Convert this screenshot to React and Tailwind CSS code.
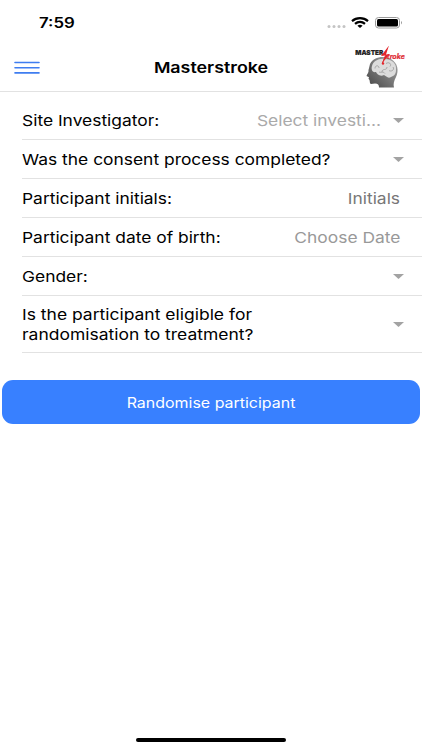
import React from 'react';

// Wide text, anchored to the side it is aligned with
const WideText = ({ className, children }) => (
  <span className={`inline-block whitespace-nowrap ${className}`}>{children}</span>
);

const Caret = () => (
  <svg className="ml-3 -mr-1 h-[5px] w-[11px] shrink-0" viewBox="0 0 11 5" fill="#a3a3a3">
    <path d="M0 0H11L5.5 5Z" />
  </svg>
);

const StatusBar = () => (
  <div className="flex h-[44px] items-center justify-between pr-[19px] pl-[39px]">
    <WideText className="mt-[1px] origin-left scale-x-[1.2] text-[14px] leading-5 font-semibold">7:59</WideText>
    <div className="mt-[1px] flex items-center">
      <svg className="mt-[7px] h-[3px] w-[20px]" viewBox="0 0 20 3" fill="#c4c4c4">
        <circle cx="2" cy="1.5" r="1.5" />
        <circle cx="7" cy="1.5" r="1.5" />
        <circle cx="12" cy="1.5" r="1.5" />
        <circle cx="17" cy="1.5" r="1.5" />
      </svg>
      <svg className="ml-[4px] h-[11px] w-[18px]" viewBox="0 0 18 11" fill="none" stroke="#000" strokeWidth="2.2">
        <path d="M1 4.1C5.5 0.1 12.5 0.1 17 4.1" />
        <path d="M4 6.9C7 4.3 11 4.3 14 6.9" />
        <path d="M6.4 8.7Q9 6.7 11.6 8.7L9 11Z" fill="#000" stroke="none" />
      </svg>
      <svg className="ml-[6px] h-[12px] w-[28px]" viewBox="0 0 28 12">
        <rect x="0.5" y="0.5" width="24" height="10.5" rx="3" fill="none" stroke="#9a9a9a" />
        <rect x="2" y="2" width="21" height="7.5" rx="1.5" fill="#000" />
        <path d="M26 4Q28 5.7 26 7.5Z" fill="#999" />
      </svg>
    </div>
  </div>
);

const Logo = () => (
  <svg className="mr-[1px] h-[44px] w-[52px]" viewBox="0 0 52 44">
    <defs>
      <linearGradient id="head" x1="0" y1="1" x2="1" y2="0">
        <stop offset="0" stopColor="#454545" />
        <stop offset="0.5" stopColor="#777" />
        <stop offset="1" stopColor="#aaa" />
      </linearGradient>
    </defs>
    {/* Head in profile, with the brain */}
    <path
      d="M15 18C18 11 29 9 36 13C43 17 44 25 41 31C39 35 38 38 39 41.5H24C24 39 23 37.5 20 37.5L16 38C14.5 37.5 15 35.5 14.5 34L13.5 32.7L14 31.2L11.5 30C12 28 14 26.5 13.5 24Z"
      fill="url(#head)"
    />
    <path
      d="M17 20C18 15 24 12 30 13C37 13 42 18 41 24C41 28 39 30 36 31C33 33 31 30 29 29C25 31 22 28 21 26C17 27 16 23 17 20Z"
      fill="#dcdcdc"
    />
    <path
      d="M20 22.5C20 19 24 19 24 22M27 26C27 22 32 25 32 21M31 17.5C34 15.5 37 18 35 20.5M38 21C40 24 36 26 34 24.5M24 26C26 27 28 25 30 27.5"
      fill="none"
      stroke="#999"
      strokeWidth="0.8"
    />
    {/* Wordmark */}
    <text x="0.3" y="8.6" textLength="28" lengthAdjust="spacingAndGlyphs" fill="#222" stroke="#222" strokeWidth="0.2" className="font-[Inter,sans-serif] text-[6.8px] font-black">
      MASTER
    </text>
    <path d="M34 -0.5L26 10L30.5 9.5L26.8 17.5L35 8L31 8.5Z" fill="#e3262d" />
    <path d="M30.5 9.5L27.5 17" stroke="#e3262d" strokeWidth="1" />
    <circle cx="28" cy="17.5" r="1.2" fill="#e3262d" />
    <text x="32" y="13" textLength="18" lengthAdjust="spacingAndGlyphs" fill="#df3037" stroke="#df3037" strokeWidth="0.2" className="font-[Inter,sans-serif] text-[7px] font-bold italic">
      troke
    </text>
  </svg>
);

const Header = () => (
  <div className="grid h-[48px] grid-cols-[1fr_auto_1fr] items-center border-b border-[#e2e2e2] pr-[14px] pl-[14px]">
    <svg className="h-[14px] w-[26px]" viewBox="0 0 26 14" stroke="#3f7df0" strokeWidth="1.6" strokeLinecap="round">
      <path d="M1 1.5H25M1 6.7H25M1 11.9H25" />
    </svg>
    <WideText className="scale-x-[1.19] text-[15px] leading-5 font-semibold">Masterstroke</WideText>
    <div className="flex justify-end">
      <Logo />
    </div>
  </div>
);

const rows = [
  { label: 'Site Investigator:', value: 'Select investi...', valueColor: 'text-[#aaaaaa]', caret: true },
  { label: 'Was the consent process completed?', caret: true },
  { label: 'Participant initials:', value: 'Initials', valueColor: 'text-[#777777]' },
  { label: 'Participant date of birth:', value: 'Choose Date', valueColor: 'text-[#999999]' },
  { label: 'Gender:', caret: true },
];

const Row = ({ label, value, valueColor, caret }) => (
  <div className="flex h-[39px] items-center justify-between border-b border-[#e2e2e2] pr-[22px]">
    <WideText className="mt-[2px] origin-left scale-x-[1.16]">{label}</WideText>
    <div className="flex items-center">
      {value && <WideText className={`mt-[2px] origin-right scale-x-[1.16] ${valueColor}`}>{value}</WideText>}
      {caret && <Caret />}
    </div>
  </div>
);

export default function App() {
  return (
    <div className="flex h-[750px] w-[422px] flex-col overflow-hidden bg-white font-[Inter,'Liberation_Sans',sans-serif] text-[15px] leading-5 text-black">
      <StatusBar />
      <Header />

      {/* Form */}
      <div className="mt-[9px] ml-[22px]">
        {rows.map((row) => (
          <Row key={row.label} {...row} />
        ))}
        <div className="flex h-[57px] items-center justify-between border-b border-[#e2e2e2] pr-[22px]">
          <WideText className="mt-[2px] origin-left scale-x-[1.165]">
            Is the participant eligible for
            <br />
            randomisation to treatment?
          </WideText>
          <Caret />
        </div>
      </div>

      <button className="mx-[2px] mt-[27px] flex h-[44px] items-center justify-center rounded-[11px] bg-[#3880ff] text-white">
        <WideText className="mt-[1px] scale-x-[1.14] text-[14px]">Randomise participant</WideText>
      </button>

      {/* Home indicator */}
      <div className="mx-auto mt-auto mb-[8px] h-[4px] w-[150px] rounded-full bg-black" />
    </div>
  );
}
